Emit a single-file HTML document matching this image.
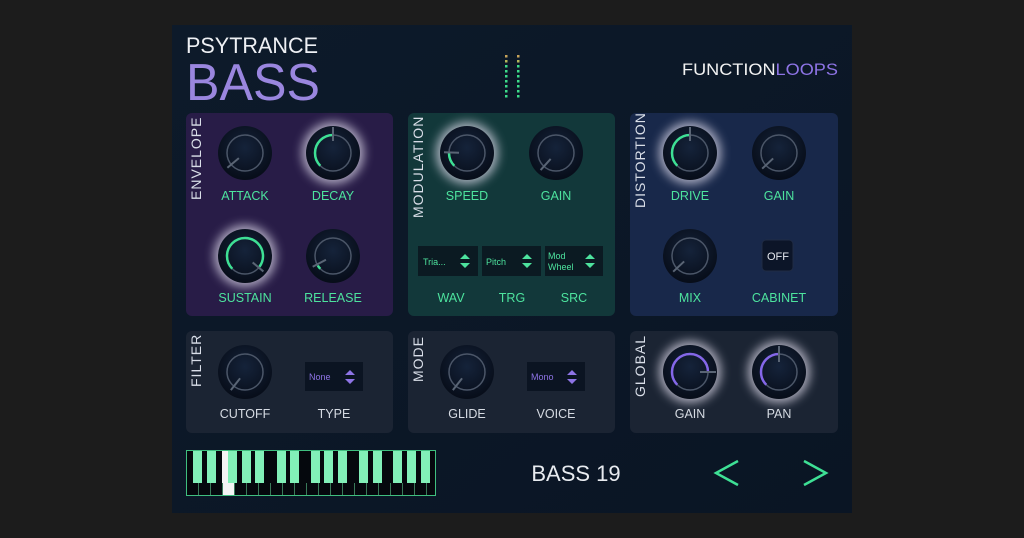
<!DOCTYPE html>
<html><head><meta charset="utf-8"><style>
html,body{margin:0;padding:0;background:#1c1c1c;width:1024px;height:538px;overflow:hidden}
svg{display:block}
text{font-family:"Liberation Sans",sans-serif}
.lb{fill:#4de39e;font-size:12.5px;text-anchor:middle}
.hd{fill:#d9dee8;font-size:14px;letter-spacing:1px}
.wl{fill:#d6dbe3;font-size:12.5px;text-anchor:middle}
</style></head><body>
<svg width="1024" height="538" viewBox="0 0 1024 538" xmlns="http://www.w3.org/2000/svg">
<defs>
<radialGradient id="kb" cx="50%" cy="40%" r="60%"><stop offset="0" stop-color="#15233a"/><stop offset="1" stop-color="#070d19"/></radialGradient>
<filter id="bl" x="-50%" y="-50%" width="200%" height="200%"><feGaussianBlur stdDeviation="5"/></filter>
<linearGradient id="bg" x1="0" y1="0" x2="1" y2="1"><stop offset="0" stop-color="#0d1a2a"/><stop offset="1" stop-color="#0a1524"/></linearGradient>
<g id="k"><circle r="27" fill="url(#kb)"/><circle r="18" fill="none" stroke="#4b5668" stroke-width="1.5"/></g>
<g id="glow"><circle r="31" fill="#e8e4f4" opacity=".7" filter="url(#bl)"/></g>
</defs>
<rect x="172" y="25" width="680" height="488" fill="url(#bg)"/>
<text x="186" y="53" fill="#eef0f4" font-size="22" textLength="132" lengthAdjust="spacingAndGlyphs">PSYTRANCE</text>
<text x="186" y="100" fill="#9a86df" font-size="52" textLength="134" lengthAdjust="spacingAndGlyphs">BASS</text>
<g fill="#3ddc8a">
<rect x="505" y="55" width="2.5" height="2.5" fill="#c7a35a"/><rect x="517" y="55" width="2.5" height="2.5" fill="#c7a35a"/>
<rect x="505" y="60" width="2.5" height="2.5" fill="#b4b65a"/><rect x="517" y="60" width="2.5" height="2.5" fill="#b4b65a"/>
<rect x="505" y="65" width="2.5" height="2.5"/><rect x="517" y="65" width="2.5" height="2.5"/>
<rect x="505" y="70" width="2.5" height="2.5"/><rect x="517" y="70" width="2.5" height="2.5"/>
<rect x="505" y="75" width="2.5" height="2.5"/><rect x="517" y="75" width="2.5" height="2.5"/>
<rect x="505" y="80" width="2.5" height="2.5"/><rect x="517" y="80" width="2.5" height="2.5"/>
<rect x="505" y="85" width="2.5" height="2.5"/><rect x="517" y="85" width="2.5" height="2.5"/>
<rect x="505" y="90" width="2.5" height="2.5"/><rect x="517" y="90" width="2.5" height="2.5"/>
<rect x="505" y="95" width="2.5" height="2.5"/><rect x="517" y="95" width="2.5" height="2.5"/>
</g>
<text x="682" y="75" font-size="17" fill="#f2f2f2" textLength="156" lengthAdjust="spacingAndGlyphs">FUNCTION<tspan fill="#8e74e6">LOOPS</tspan></text>
<rect x="186" y="113" width="207" height="203" rx="6" fill="#281c47"/>
<rect x="408" y="113" width="207" height="203" rx="6" fill="#12383a"/>
<rect x="630" y="113" width="208" height="203" rx="6" fill="#18284a"/>
<rect x="186" y="331" width="207" height="102" rx="6" fill="#1b2433"/>
<rect x="408" y="331" width="207" height="102" rx="6" fill="#1b2433"/>
<rect x="630" y="331" width="208" height="102" rx="6" fill="#1b2433"/>
<text class="hd" transform="translate(201,200) rotate(-90)">ENVELOPE</text>
<text class="hd" transform="translate(423,218) rotate(-90)">MODULATION</text>
<text class="hd" transform="translate(645,208) rotate(-90)">DISTORTION</text>
<text class="hd" transform="translate(201,387) rotate(-90)">FILTER</text>
<text class="hd" transform="translate(423,382) rotate(-90)">MODE</text>
<text class="hd" transform="translate(645,397) rotate(-90)">GLOBAL</text>
<g transform="translate(245,153)"><use href="#k"/><line x1="0" y1="-8" x2="0" y2="-23" stroke="#5a6575" stroke-width="2" transform="rotate(-130)"/></g>
<g transform="translate(333,153)"><use href="#glow"/><use href="#k"/><circle r="18" fill="none" stroke="#3ee095" stroke-width="2.5" stroke-dasharray="42.4 200" transform="rotate(135)"/><line x1="0" y1="-12" x2="0" y2="-26" stroke="#5a6575" stroke-width="2"/></g>
<g transform="translate(245,256)"><use href="#glow"/><use href="#k"/><circle r="18" fill="none" stroke="#3ee095" stroke-width="2.5" stroke-dasharray="82 200" transform="rotate(135)"/><line x1="0" y1="-10" x2="0" y2="-24" stroke="#5a6575" stroke-width="2" transform="rotate(130)"/></g>
<g transform="translate(333,256)"><use href="#k"/><circle r="18" fill="none" stroke="#3ee095" stroke-width="2.5" stroke-dasharray="4 200" transform="rotate(135)"/><line x1="0" y1="-8" x2="0" y2="-23" stroke="#5a6575" stroke-width="2" transform="rotate(-118)"/></g>
<g transform="translate(467,153)"><use href="#glow"/><use href="#k"/><circle r="18" fill="none" stroke="#3ee095" stroke-width="2.5" stroke-dasharray="14 200" transform="rotate(135)"/><line x1="0" y1="-8" x2="0" y2="-23" stroke="#5a6575" stroke-width="2" transform="rotate(-88)"/></g>
<g transform="translate(556,153)"><use href="#k"/><line x1="0" y1="-8" x2="0" y2="-23" stroke="#5a6575" stroke-width="2" transform="rotate(-138)"/></g>
<g transform="translate(690,153)"><use href="#glow"/><use href="#k"/><circle r="18" fill="none" stroke="#3ee095" stroke-width="2.5" stroke-dasharray="42.4 200" transform="rotate(135)"/><line x1="0" y1="-12" x2="0" y2="-26" stroke="#5a6575" stroke-width="2"/></g>
<g transform="translate(779,153)"><use href="#k"/><line x1="0" y1="-8" x2="0" y2="-23" stroke="#5a6575" stroke-width="2" transform="rotate(-133)"/></g>
<g transform="translate(690,256)"><use href="#k"/><line x1="0" y1="-8" x2="0" y2="-23" stroke="#5a6575" stroke-width="2" transform="rotate(-133)"/></g>
<g transform="translate(245,372)"><use href="#k"/><line x1="0" y1="-8" x2="0" y2="-23" stroke="#5a6575" stroke-width="2" transform="rotate(-142)"/></g>
<g transform="translate(467,372)"><use href="#k"/><line x1="0" y1="-8" x2="0" y2="-23" stroke="#5a6575" stroke-width="2" transform="rotate(-142)"/></g>
<g transform="translate(690,372)"><use href="#glow"/><use href="#k"/><circle r="18" fill="none" stroke="#8467e8" stroke-width="2.5" stroke-dasharray="70.7 200" transform="rotate(135)"/><line x1="0" y1="-10" x2="0" y2="-26" stroke="#5a6575" stroke-width="2" transform="rotate(90)"/></g>
<g transform="translate(779,372)"><use href="#glow"/><use href="#k"/><circle r="18" fill="none" stroke="#8467e8" stroke-width="2.5" stroke-dasharray="42.4 200" transform="rotate(135)"/><line x1="0" y1="-10" x2="0" y2="-26" stroke="#5a6575" stroke-width="2"/></g>
<text class="lb" x="245" y="200">ATTACK</text><text class="lb" x="333" y="200">DECAY</text>
<text class="lb" x="245" y="302">SUSTAIN</text><text class="lb" x="333" y="302">RELEASE</text>
<text class="lb" x="467" y="200">SPEED</text><text class="lb" x="556" y="200">GAIN</text>
<text class="lb" x="451" y="302">WAV</text><text class="lb" x="512" y="302">TRG</text><text class="lb" x="574" y="302">SRC</text>
<text class="lb" x="690" y="200">DRIVE</text><text class="lb" x="779" y="200">GAIN</text>
<text class="lb" x="690" y="302">MIX</text><text class="lb" x="779" y="302">CABINET</text>
<text class="wl" x="245" y="418">CUTOFF</text><text class="wl" x="334" y="418">TYPE</text>
<text class="wl" x="467" y="418">GLIDE</text><text class="wl" x="556" y="418">VOICE</text>
<text class="wl" x="690" y="418">GAIN</text><text class="wl" x="779" y="418">PAN</text>
<rect x="418" y="246" width="60" height="30" fill="#0b1a22"/>
<rect x="482" y="246" width="59" height="30" fill="#0b1a22"/>
<rect x="545" y="246" width="58" height="30" fill="#0b1a22"/>
<text x="423" y="265" fill="#4de39e" font-size="9">Tria...</text>
<text x="486" y="265" fill="#4de39e" font-size="9">Pitch</text>
<text x="548" y="259" fill="#4de39e" font-size="9">Mod</text><text x="548" y="270" fill="#4de39e" font-size="9">Wheel</text>
<g fill="#4de39e">
<path d="M460 259 l5 -5 l5 5z M460 263 l5 5 l5 -5z"/>
<path d="M522 259 l5 -5 l5 5z M522 263 l5 5 l5 -5z"/>
<path d="M585 259 l5 -5 l5 5z M585 263 l5 5 l5 -5z"/>
</g>
<rect x="305" y="362" width="58" height="29" fill="#0b1422"/>
<rect x="527" y="362" width="58" height="29" fill="#0b1422"/>
<text x="309" y="380" fill="#8e74e6" font-size="9">None</text>
<text x="531" y="380" fill="#8e74e6" font-size="9">Mono</text>
<g fill="#8e74e6"><path d="M345 375 l5 -5 l5 5z M345 379 l5 5 l5 -5z"/><path d="M567 375 l5 -5 l5 5z M567 379 l5 5 l5 -5z"/></g>
<rect x="762" y="240" width="31" height="31" rx="4" fill="#0c1528" stroke="#1f2b44"/>
<text x="778" y="260" fill="#e6e9ef" font-size="11" text-anchor="middle">OFF</text>
<rect x="186.5" y="450.5" width="249" height="45" fill="#05080d" stroke="#3fbf7f"/>
<rect x="222" y="451" width="6" height="44" fill="#f4f4f4"/>
<rect x="222" y="483" width="12" height="12" fill="#f4f4f4"/>
<g stroke="#3a7a5a" stroke-width="1">
<path d="M198.5 483V495M210.5 483V495M222.5 483V495M234.5 483V495M246.5 483V495M258.5 483V495M270.5 483V495M282.5 483V495M294.5 483V495M306.5 483V495M318.5 483V495M330.5 483V495M342.5 483V495M354.5 483V495M366.5 483V495M378.5 483V495M390.5 483V495M402.5 483V495M414.5 483V495M426.5 483V495"/>
</g>
<g fill="#82f0b8">
<rect x="193" y="451" width="9" height="32"/><rect x="207" y="451" width="9" height="32"/>
<rect x="228" y="451" width="9" height="32"/><rect x="242" y="451" width="9" height="32"/><rect x="255" y="451" width="9" height="32"/>
<rect x="277" y="451" width="9" height="32"/><rect x="290" y="451" width="9" height="32"/>
<rect x="311" y="451" width="9" height="32"/><rect x="324" y="451" width="9" height="32"/><rect x="338" y="451" width="9" height="32"/>
<rect x="359" y="451" width="9" height="32"/><rect x="373" y="451" width="9" height="32"/>
<rect x="393" y="451" width="9" height="32"/><rect x="407" y="451" width="9" height="32"/><rect x="421" y="451" width="9" height="32"/>
</g>
<text x="576" y="481" fill="#e8ebf0" font-size="22" text-anchor="middle">BASS 19</text>
<path d="M738 461 L716 473 L738 485" fill="none" stroke="#3ee095" stroke-width="2.5"/>
<path d="M804 461 L826 473 L804 485" fill="none" stroke="#3ee095" stroke-width="2.5"/>
</svg>
</body></html>
